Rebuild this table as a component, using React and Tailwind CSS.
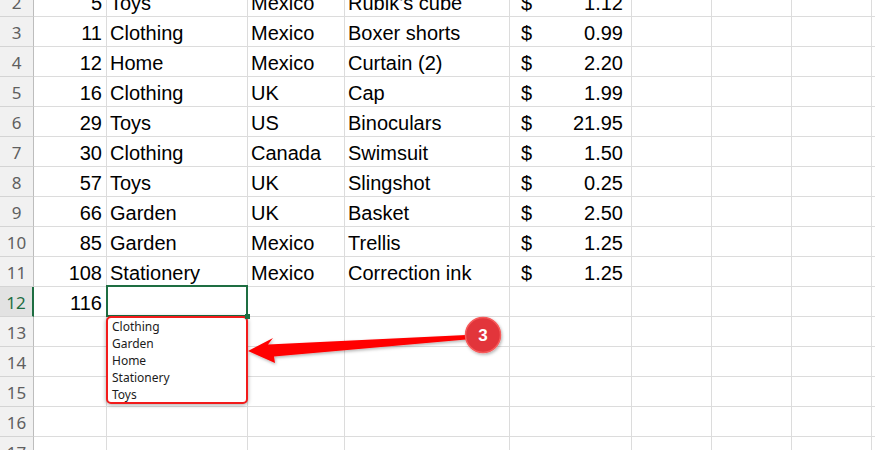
import React from "react";

const data = [
  [2, "5", "Toys", "Mexico", "Rubik’s cube", "1.12"],
  [3, "11", "Clothing", "Mexico", "Boxer shorts", "0.99"],
  [4, "12", "Home", "Mexico", "Curtain (2)", "2.20"],
  [5, "16", "Clothing", "UK", "Cap", "1.99"],
  [6, "29", "Toys", "US", "Binoculars", "21.95"],
  [7, "30", "Clothing", "Canada", "Swimsuit", "1.50"],
  [8, "57", "Toys", "UK", "Slingshot", "0.25"],
  [9, "66", "Garden", "UK", "Basket", "2.50"],
  [10, "85", "Garden", "Mexico", "Trellis", "1.25"],
  [11, "108", "Stationery", "Mexico", "Correction ink", "1.25"],
  [12, "116", null, null, null, null],
  [13], [14], [15], [16], [17],
];

const cellBase = "h-[30px] shrink-0 border-r border-b border-[#dcdcdc] flex items-end pb-[1px] overflow-visible";

function Dropdown() {
  return (
    <div className="absolute left-[-1px] top-[29px] z-20 w-[142px] h-[88px] rounded-[5px] border-2 border-[#f21b1b] bg-white shadow-[0_1px_4px_rgba(0,0,0,0.35)] pl-[4px] font-['Noto_Sans',sans-serif] text-[12px] leading-[17px] text-[#1b1b1b]">
      {["Clothing", "Garden", "Home", "Stationery", "Toys"].map((t) => (
        <div key={t}>{t}</div>
      ))}
    </div>
  );
}

function Row({ r }) {
  const [n, a, b, c, d, e] = r;
  const sel = n === 12;
  return (
    <div className="flex h-[30px]">
      <div
        className={
          "w-[34px] h-[30px] shrink-0 border-b border-[#d4d4d4] flex items-center justify-center pt-[3px] font-['Noto_Sans',sans-serif] text-[17px] " +
          (sel
            ? "bg-[#e2e2e2] text-[#1e6e42] border-r-2 border-r-[#1e6e42]"
            : "bg-[#f1f1f1] text-[#5f5f5f] border-r border-r-[#bdbdbd]")
        }
      >
        {n}
      </div>
      <div className={cellBase + " w-[73px] justify-end pr-[4px]"}>
        <span className="leading-[23px]">{a}</span>
      </div>
      <div className={cellBase + " w-[141px] pl-[3px] relative"}>
        <span className="leading-[23px]">{b}</span>
        {sel && (
          <>
            <div className="absolute left-[-1px] top-[-2px] right-[-1px] bottom-[-1px] border-2 border-[#1e6e42] z-10" />
            <div className="absolute right-[-3px] bottom-[-3px] w-[5px] h-[5px] bg-[#1e6e42] z-30" />
            <Dropdown />
          </>
        )}
      </div>
      <div className={cellBase + " w-[97px] pl-[3px]"}>
        <span className="leading-[23px]">{c}</span>
      </div>
      <div className={cellBase + " w-[165px] pl-[3px]"}>
        <span className="leading-[23px] whitespace-nowrap">{d}</span>
      </div>
      <div className={cellBase + " w-[122px] pl-[11px] pr-[8px] justify-between"}>
        {e && (
          <>
            <span className="leading-[23px]">$</span>
            <span className="leading-[23px]">{e}</span>
          </>
        )}
      </div>
      <div className={cellBase + " w-[80px]"} />
      <div className={cellBase + " w-[80px]"} />
      <div className={cellBase + " w-[80px]"} />
      <div className="h-[30px] flex-1 border-b border-[#dcdcdc]" />
    </div>
  );
}

export default function App() {
  return (
    <div className="relative w-[875px] h-[450px] overflow-hidden bg-white font-['Liberation_Sans',Arial,sans-serif] text-[20px] text-black">
      <div className="mt-[-13px]">
        {data.map((r) => (
          <Row key={r[0]} r={r} />
        ))}
      </div>
      <svg
        className="absolute left-0 top-0 z-40 pointer-events-none"
        width="875"
        height="450"
        viewBox="0 0 875 450"
      >
        <defs>
          <filter id="sh" x="-20%" y="-20%" width="140%" height="140%">
            <feDropShadow dx="1" dy="1.5" stdDeviation="1.5" floodColor="#000" floodOpacity="0.3" />
          </filter>
        </defs>
        <polygon
          points="248,351 273,338 268,344.5 466,335 466,339.5 274,356.5 275,363"
          fill="#ff0000"
          filter="url(#sh)"
        />
        <circle cx="483" cy="335" r="17.5" fill="#e2353b" stroke="#f65a5a" strokeWidth="1.5" filter="url(#sh)" />
        <text
          x="483"
          y="341"
          textAnchor="middle"
          fill="#ffffff"
          fontFamily="Liberation Sans, Arial, sans-serif"
          fontWeight="bold"
          fontSize="17"
        >
          3
        </text>
      </svg>
    </div>
  );
}
